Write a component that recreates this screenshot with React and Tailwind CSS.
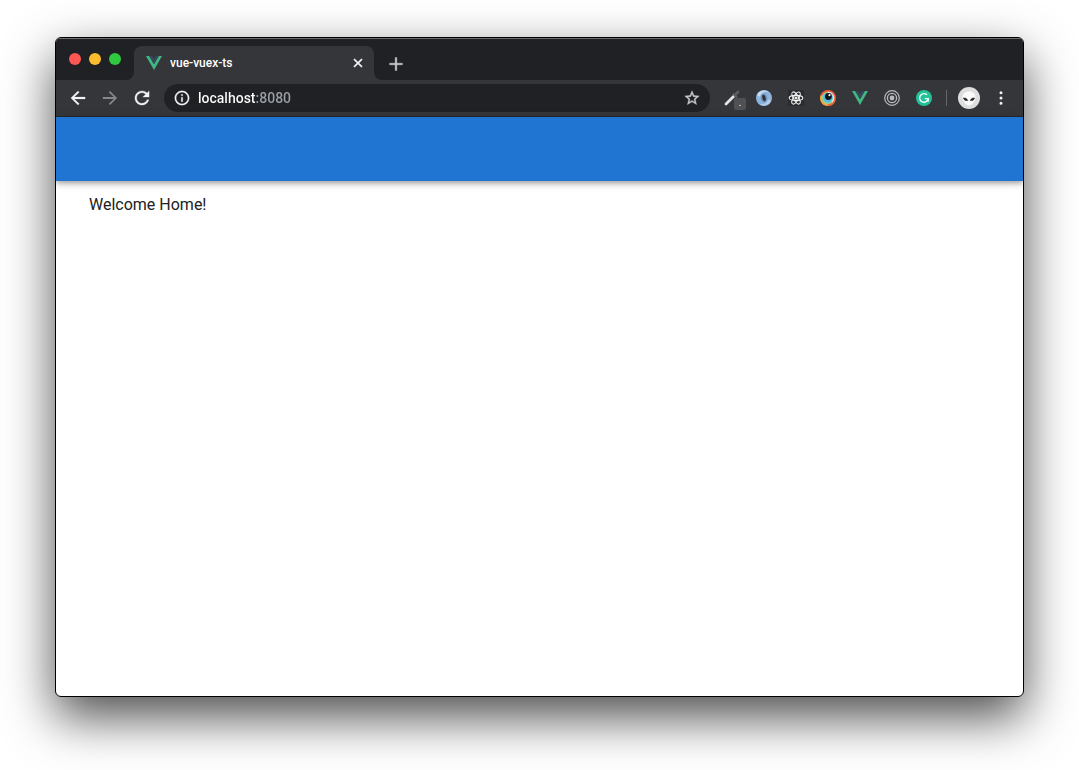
import React from 'react';

const Icon = ({ path, viewBox = '3 3 18 18', stroke = 0 }) => (
  <svg viewBox={viewBox} className="size-4 shrink-0" fill="currentColor" stroke="currentColor" strokeWidth={stroke} aria-hidden="true">
    <path d={path} />
  </svg>
);

const VueLogo = () => (
  <svg viewBox="0 0 16 16" className="size-4 shrink-0" aria-hidden="true">
    <path d="M0 1h3.2L8 9.3 12.8 1H16L8 15z" fill="#41b883" />
    <path d="M3.2 1h3L8 4.2 9.8 1h3L8 9.3z" fill="#35495e" />
  </svg>
);

const Picker = () => (
  <svg viewBox="0 0 16 16" className="size-4 overflow-visible" aria-hidden="true">
    <path d="M2 14L9.500 6.500" stroke="#e4e4e4" strokeWidth="2.8" strokeLinecap="round" />
    <path d="M9 3.500l4 4" stroke="#5c5d5f" strokeWidth="2" />
    <path d="M11 5l3-3" stroke="#5c5d5f" strokeWidth="2.600" strokeLinecap="round" />
  </svg>
);

const Ring = () => (
  <svg viewBox="0 0 16 16" className="size-4" aria-hidden="true">
    <circle cx="8" cy="8" r="8" fill="#8fb4dc" />
    <path d="M1 5a8 8 0 0 1 12-3c-4-1-8 0-9 5z" fill="#c9dcef" />
    <path d="M15 11a8 8 0 0 1-12 3c4 1 8 0 9-5z" fill="#b5cfe8" />
    <ellipse cx="8" cy="8" rx="3.300" ry="4.500" fill="#7397bf" transform="rotate(-12 8 8)" />
    <ellipse cx="8" cy="8" rx="1.700" ry="3.300" fill="#2f3338" transform="rotate(-12 8 8)" />
  </svg>
);

const ReactLogo = () => (
  <svg viewBox="0 0 16 16" className="size-4 bg-[#2b2c30]" fill="none" stroke="#f1f1f1" strokeWidth="1.1" aria-hidden="true">
    <ellipse cx="8" cy="8" rx="6.8" ry="2.6" />
    <ellipse cx="8" cy="8" rx="6.8" ry="2.6" transform="rotate(60 8 8)" />
    <ellipse cx="8" cy="8" rx="6.8" ry="2.6" transform="rotate(120 8 8)" />
    <circle cx="8" cy="8" r="1" fill="#f1f1f1" />
  </svg>
);

const Eye = () => (
  <svg viewBox="0 0 16 16" className="size-4" aria-hidden="true">
    <circle cx="8" cy="8" r="8" fill="#ef5b3c" />
    <path d="M8 16A8 8 0 0 1 .5 5.500L8 8z" fill="#f0a83a" />
    <path d="M8 16a8 8 0 0 0 7.500-5.500L8 8z" fill="#e8643a" />
    <circle cx="8" cy="8" r="6.200" fill="#9bcf8d" />
    <path d="M8 1.800a6.200 6.200 0 0 1 4.400 10.600L8 8z" fill="#f3e3d3" />
    <circle cx="8" cy="7.800" r="4.900" fill="#4fc0e0" />
    <circle cx="8.400" cy="6.500" r="3.400" fill="#10151c" />
    <circle cx="9.500" cy="5.200" r="1.100" fill="#fff" />
  </svg>
);

const Target = () => (
  <svg viewBox="0 0 16 16" className="size-4" fill="none" stroke="#b9babc" aria-hidden="true">
    <circle cx="8" cy="8" r="7.3" strokeWidth="1.2" />
    <circle cx="8" cy="8" r="4.6" strokeWidth="1.3" />
    <circle cx="8" cy="8" r="2.4" fill="#b9babc" stroke="none" />
  </svg>
);

const Grammar = () => (
  <svg viewBox="0 0 16 16" className="size-4" aria-hidden="true">
    <circle cx="8" cy="8" r="8" fill="#23c299" />
    <path d="M11 4.9A4.3 4.3 0 1 0 12.2 8.6H8.8M12.2 8.4v3" fill="none" stroke="#fff" strokeWidth="1.3" />
  </svg>
);

const Alien = () => (
  <svg viewBox="0 0 22 22" className="size-[22px]" aria-hidden="true">
    <circle cx="11" cy="11" r="11" fill="#dedede" />
    <path d="M11 4.500c4 0 6.500 2.500 6.500 6 0 3.500-3.500 8-6.500 8s-6.500-4.500-6.500-8c0-3.500 2.500-6 6.500-6z" fill="#fafafa" />
    <path d="M5.500 11c2.200-.2 3.700.8 4.200 2.500-2.200.5-3.900-.6-4.200-2.500z" fill="#222" stroke="#222" strokeWidth="0.600" />
    <path d="M16.500 11c-2.200-.2-3.700.8-4.200 2.500 2.200.5 3.900-.6 4.200-2.500z" fill="#222" stroke="#222" strokeWidth="0.600" />
  </svg>
);

const icons = {
  back: 'M20 11H7.830l5.590-5.590L12 4l-8 8 8 8 1.410-1.410L7.830 13H20v-2z',
  forward: 'M12 4l-1.410 1.410L16.170 11H4v2h12.170l-5.580 5.590L12 20l8-8z',
  reload:
    'M17.650 6.350C16.200 4.900 14.210 4 12 4c-4.420 0-7.990 3.580-7.990 8s3.570 8 7.990 8c3.730 0 6.840-2.550 7.730-6h-2.080c-.82 2.330-3.040 4-5.650 4-3.310 0-6-2.690-6-6s2.690-6 6-6c1.660 0 3.140.69 4.220 1.780L13 11h7V4l-2.350 2.350z',
  info: 'M11 7h2v2h-2zm0 4h2v6h-2zm1-9C6.480 2 2 6.480 2 12s4.480 10 10 10 10-4.480 10-10S17.520 2 12 2zm0 18c-4.410 0-8-3.590-8-8s3.590-8 8-8 8 3.590 8 8-3.590 8-8 8z',
  star: 'M22 9.240l-7.190-.62L12 2 9.190 8.630 2 9.240l5.460 4.730L5.820 21 12 17.270 18.180 21l-1.630-7.030L22 9.240zM12 15.400l-3.760 2.270 1-4.280-3.320-2.880 4.380-.38L12 6.100l1.710 4.040 4.380.38-3.320 2.880 1 4.280L12 15.400z',
  close: 'M18 7.400L16.600 6 12 10.600 7.400 6 6 7.400l4.600 4.600L6 16.600 7.400 18l4.600-4.600 4.600 4.600 1.400-1.400-4.600-4.600z',
  plus: 'M20 13h-7v7h-2v-7H4v-2h7V4h2v7h7v2z',
  more: 'M12 4.300a1.700 1.700 0 1 0 0 3.400 1.700 1.700 0 0 0 0-3.400zm0 6a1.700 1.700 0 1 0 0 3.400 1.700 1.700 0 0 0 0-3.400zm0 6a1.700 1.700 0 1 0 0 3.400 1.700 1.700 0 0 0 0-3.400z',
};

const extensions = [
  { id: 'ring', label: 'Ring', icon: Ring },
  { id: 'react', label: 'React Developer Tools', icon: ReactLogo },
  { id: 'eye', label: 'Eye', icon: Eye },
  { id: 'vue', label: 'Vue.js devtools', icon: VueLogo },
  { id: 'target', label: 'Target', icon: Target },
  { id: 'grammar', label: 'Grammar', icon: Grammar },
];

const TabStrip = () => (
  <div className="flex h-[42px]">
    <div className="flex w-[78px] items-center gap-2 rounded-br-lg border-t border-[#6b6c6e] bg-[#202124] pb-0.5 pl-[13px]">
      <button aria-label="Close window" className="size-3 rounded-full bg-[#fc5753]" />
      <button aria-label="Minimize window" className="size-3 rounded-full bg-[#fdbc2e]" />
      <button aria-label="Zoom window" className="size-3 rounded-full bg-[#2fc840]" />
    </div>
    <div className="w-60 border-t border-[#6b6c6e] bg-[#202124] pt-[7px]">
      <div className="flex h-full items-center rounded-t-lg bg-[#35363a] px-3">
        <VueLogo />
        <span className="ml-2 flex-1 truncate text-xs font-medium text-white">vue-vuex-ts</span>
        <button aria-label="Close tab" className="-mr-1 text-[#f1f3f4]">
          <Icon path={icons.close} viewBox="1 1 22 22" stroke={0.5} />
        </button>
      </div>
    </div>
    <div className="flex flex-1 items-center rounded-bl-lg border-t border-[#6b6c6e] bg-[#202124] pt-2 pl-3.5">
      <button aria-label="New tab" className="text-[#cfd0d1]">
        <Icon path={icons.plus} viewBox="2 2 20 20" stroke={0.5} />
      </button>
    </div>
  </div>
);

const Toolbar = () => (
  <div className="flex h-[37px] items-center border-b border-[#28292b] bg-[#35363a] px-3.5">
    <nav className="flex gap-4 text-[#f1f3f4]">
      <button aria-label="Back"><Icon path={icons.back} stroke={0.3} /></button>
      <button aria-label="Forward" className="text-[#86878a]"><Icon path={icons.forward} /></button>
      <button aria-label="Reload"><Icon path={icons.reload} stroke={0.3} /></button>
    </nav>

    <div className="ml-3.5 flex h-7 min-w-0 flex-1 items-center rounded-full bg-[#202124] px-2.5">
      <button aria-label="Site information" className="text-[#f1f3f4]">
        <Icon path={icons.info} viewBox="1 1 22 22" stroke={0.3} />
      </button>
      <input
        type="text"
        aria-label="Address"
        defaultValue="localhost:8080"
        className="ml-2 min-w-0 flex-1 bg-[linear-gradient(90deg,#fff_58px,#9aa0a6_58px)] bg-clip-text text-sm font-medium text-transparent outline-none"
      />
      <button aria-label="Bookmark" className="text-[#c6c7c9]">
        <Icon path={icons.star} viewBox="1 1 22 22" stroke={0.6} />
      </button>
    </div>

    <div className="ml-3.5 flex gap-4">
      <button aria-label="Color picker" className="relative">
        <Picker />
        <span className="absolute top-2 left-2.5 flex h-3 w-3 items-center justify-center rounded-xs bg-[#505154] pb-1 text-[10px] text-white">
          .
        </span>
      </button>
      {extensions.map((item) => (
        <button key={item.id} aria-label={item.label}>
          <item.icon />
        </button>
      ))}
    </div>

    <div className="ml-3.5 h-4 w-px bg-[#66676a]" />
    <button aria-label="Profile" className="ml-[11px]">
      <Alien />
    </button>
    <button aria-label="Menu" className="ml-[13px] text-[#f1f3f4]">
      <Icon path={icons.more} />
    </button>
  </div>
);

const App = () => {
  return (
    <div className="flex min-h-screen bg-white px-[55px] pt-[37px] pb-[73px] font-['Roboto',sans-serif]">
      <div className="flex flex-1 flex-col overflow-hidden rounded-md border border-black bg-white shadow-[0_20px_50px_rgba(0,0,0,0.7)]">
        <header className="bg-[#35363a]">
          <TabStrip />
          <Toolbar />
        </header>
        <div className="h-16 bg-[#2175d2] shadow-[0_2px_4px_-1px_rgba(0,0,0,0.2),0_4px_5px_rgba(0,0,0,0.14),0_1px_10px_rgba(0,0,0,0.12)]" />
        <main className="flex-1 px-[33px] py-3">
          <p className="text-base text-[#212121]">Welcome Home!</p>
        </main>
      </div>
    </div>
  );
};

export default App;
